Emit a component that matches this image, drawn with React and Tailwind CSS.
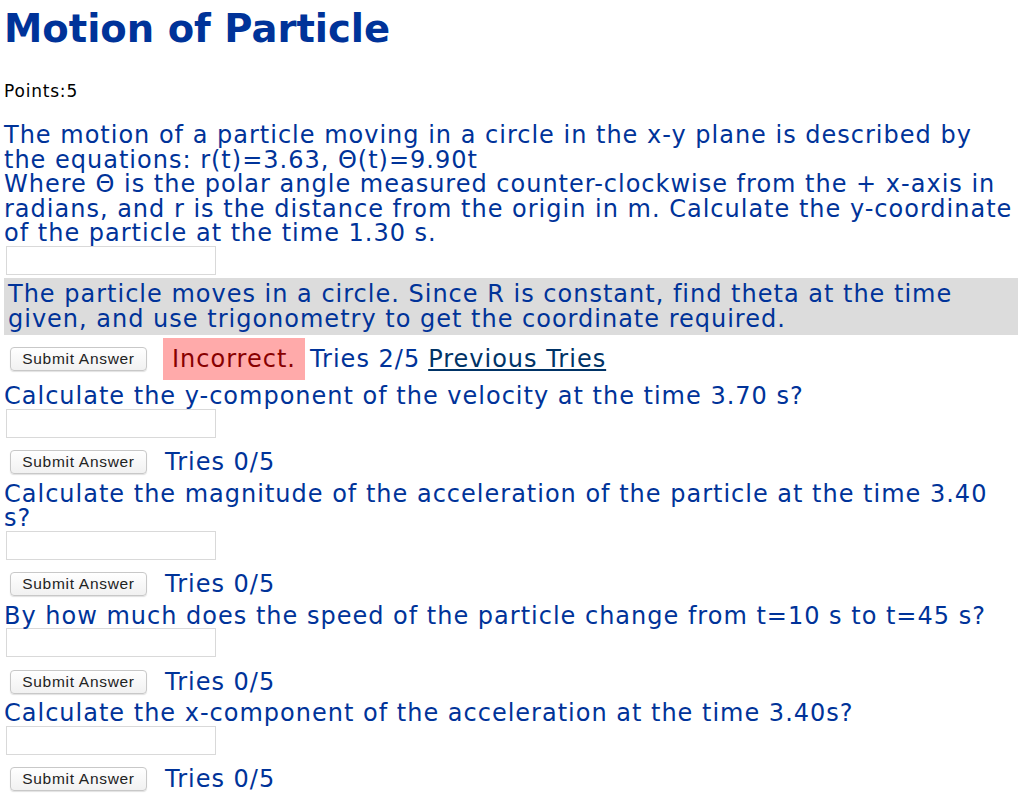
import React from "react";

const font = { fontFamily: '"DejaVu Sans", Verdana, sans-serif' };

function Input() {
  return <div className="ml-[6px] w-[210px] h-[29px] border border-[#d9d9d9] bg-white" />;
}

function Submit() {
  return (
    <button
      className="ml-[10px] w-[137px] h-[24px] rounded-[4px] border border-[#c8c8c8] bg-gradient-to-b from-white to-[#f1f1f1] text-[15.5px] tracking-[0.7px] text-[#222] shadow-[0_1px_1px_rgba(0,0,0,0.12)] flex items-center justify-center"
      style={{ fontFamily: '"Liberation Sans", Helvetica, Arial, sans-serif' }}
    >
      Submit Answer
    </button>
  );
}

function Row({ tries }) {
  return (
    <div className="h-[44px] pt-[5px] flex items-center">
      <Submit />
      <span className="ml-[18px]">Tries {tries}</span>
    </div>
  );
}

function Q({ children, tries = "0/5" }) {
  return (
    <div>
      <div className="pl-[4px] pr-[6px]">{children}</div>
      <Input />
      <Row tries={tries} />
    </div>
  );
}

export default function App() {
  return (
    <div className="w-[1024px] h-[800px] overflow-hidden bg-white text-[#003399] text-[24px] leading-[24.6px] tracking-[1px]" style={font}>
      <h1 className="pl-[4px] pt-[7px] text-[38.5px] leading-[44px] font-bold tracking-normal text-[#003399]">Motion of Particle</h1>
      <div className="pl-[4px] mt-[30px] text-[17px] leading-[20px] tracking-[0.8px] text-black">Points:5</div>
      <div className="pl-[4px] pr-[6px] mt-[22px]">
        The motion of a particle moving in a circle in the x-y plane is described by the equations: r(t)=3.63, Θ(t)=9.90t
        <br />
        Where Θ is the polar angle measured counter-clockwise from the + x-axis in radians, and r is the distance from the origin in m. Calculate the y-coordinate of the particle at the time 1.30 s.
      </div>
      <Input />
      <div className="mt-[3px] ml-[4px] w-[1014px] h-[57px] bg-[#dcdcdc] pl-[4px] pr-[40px] pt-[4px]">
        The particle moves in a circle. Since R is constant, find theta at the time given, and use trigonometry to get the coordinate required.
      </div>
      <div className="h-[49px] flex items-center">
        <Submit />
        <span className="ml-[16px] h-[42px] px-[9px] bg-[#ffaaaa] text-[#880000] flex items-center">Incorrect.</span>
        <span className="ml-[5px]">Tries 2/5</span>
        <a href="#" className="ml-[8px] underline text-[#003366]">Previous Tries</a>
      </div>
      <Q>Calculate the y-component of the velocity at the time 3.70 s?</Q>
      <Q>Calculate the magnitude of the acceleration of the particle at the time 3.40 s?</Q>
      <Q>By how much does the speed of the particle change from t=10 s to t=45 s?</Q>
      <Q>Calculate the x-component of the acceleration at the time 3.40s?</Q>
    </div>
  );
}
